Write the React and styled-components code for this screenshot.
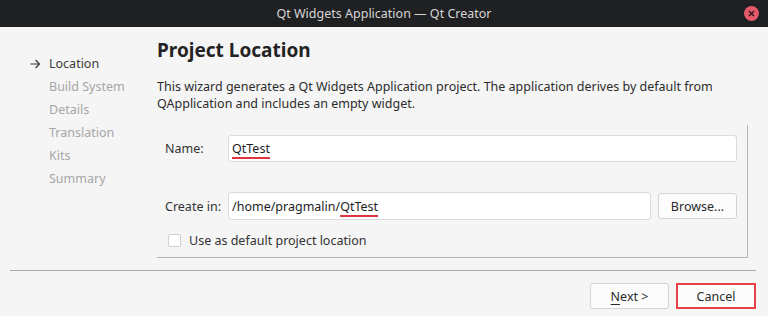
import styled, { createGlobalStyle } from 'styled-components'

const GlobalStyle = createGlobalStyle`
    html, body {
        margin: 0;
        padding: 0;
        background: #f5f5f5;
        font-family: "Noto Sans", "DejaVu Sans", sans-serif;
    }
`

const Window = styled.div`
    width: 768px;
    height: 316px;
    background: #f5f5f5;
    display: flex;
    flex-direction: column;
    overflow: hidden;
`

const TitleBar = styled.div`
    flex-shrink: 0;
    height: 27px;
    background: #1f2022;
    display: grid;
    grid-template-columns: 1fr auto 1fr;
    align-items: center;
    color: #d6d6d6;
    font-size: 12.5px;
`

const TitleText = styled.div`
    grid-column: 2;
`

const CloseButton = styled.div`
    grid-column: 3;
    justify-self: end;
    margin-right: 9px;
    width: 15px;
    height: 15px;
    border-radius: 50%;
    background: #e55a6b;
    display: flex;
    align-items: center;
    justify-content: center;
`

const Body = styled.div`
    display: flex;
    flex-shrink: 0;
`

const Sidebar = styled.div`
    width: 127px;
    padding: 25px 0 0 30px;
    display: flex;
    flex-direction: column;
`

const Step = styled.div`
    display: flex;
    align-items: center;
    height: 23px;
    font-size: 12.5px;
    color: ${p => (p.$active ? '#3b3b3b' : '#a6a6a6')};
`

const StepArrow = styled.span`
    width: 19px;
    display: flex;
    align-items: center;
`

const Main = styled.div`
    flex: 1;
    padding: 11px 20px 0 0;
    display: flex;
    flex-direction: column;
`

const Heading = styled.div`
    font-size: 19px;
    line-height: 24px;
    font-weight: 700;
    color: #232323;
`

const Description = styled.div`
    margin-top: 16px;
    font-size: 12.5px;
    line-height: 17px;
    color: #2c2c2c;
`

const Frame = styled.div`
    box-sizing: border-box;
    margin-top: 13px;
    height: 133px;
    border-right: 1px solid #b4b4b4;
    border-bottom: 1px solid #b4b4b4;
    padding: 10px 10px 0 8px;
    display: flex;
    flex-direction: column;
`

const FieldRow = styled.div`
    display: flex;
    align-items: center;
    margin-top: ${p => p.$top || 0}px;
`

const Label = styled.div`
    width: 63px;
    font-size: 12.5px;
    color: #333;
`

const Input = styled.div`
    flex: 1;
    height: ${p => p.$h || 27}px;
    box-sizing: border-box;
    background: #fff;
    border: 1px solid #dadada;
    border-radius: 3px;
    padding: 0 3px;
    display: flex;
    align-items: center;
    font-size: 12.5px;
    color: #1e1e1e;
`

const Marked = styled.span`
    text-decoration: underline;
    text-decoration-color: #e0323f;
    text-decoration-thickness: 2px;
    text-underline-offset: 4px;
`

const Button = styled.div`
    width: ${p => p.$w || 79}px;
    height: 26px;
    box-sizing: border-box;
    background: #fcfcfc;
    border: ${p => (p.$alert ? '2px solid #e8414c' : '1px solid #d4d4d4')};
    border-radius: ${p => (p.$alert ? '0' : '3px')};
    margin-left: ${p => p.$gap || 0}px;
    display: flex;
    align-items: center;
    justify-content: center;
    font-size: 12.5px;
    color: #2a2a2a;
`

const CheckRow = styled.div`
    display: flex;
    align-items: center;
    margin-top: 12px;
    padding-left: 3px;
    font-size: 12.5px;
    color: #333;
`

const CheckBox = styled.div`
    width: 13px;
    height: 13px;
    box-sizing: border-box;
    background: #fff;
    border: 1px solid #d0d0d0;
    border-radius: 2px;
    margin-right: 8px;
`

const Separator = styled.div`
    flex-shrink: 0;
    margin: 12px 12px 0 10px;
    height: 1px;
    background: #a9a9a9;
`

const Footer = styled.div`
    display: flex;
    justify-content: flex-end;
    align-items: center;
    gap: 7px;
    padding: 12px 12px 0 0;
`

const Mnemonic = styled.span`
    text-decoration: underline;
    text-underline-offset: 3px;
`

const steps = ['Location', 'Build System', 'Details', 'Translation', 'Kits', 'Summary']

function App() {
    return (
        <Window>
            <GlobalStyle />
            <TitleBar>
                <TitleText>Qt Widgets Application — Qt Creator</TitleText>
                <CloseButton>
                    <svg width="7" height="7" viewBox="0 0 7 7">
                        <path d="M1 1 L6 6 M6 1 L1 6" stroke="#3a1a1e" strokeWidth="1.6" />
                    </svg>
                </CloseButton>
            </TitleBar>
            <Body>
                <Sidebar>
                    {steps.map((s, i) => (
                        <Step key={s} $active={i === 0}>
                            <StepArrow>
                                {i === 0 && (
                                    <svg width="11" height="10" viewBox="0 0 11 10">
                                        <path d="M0.5 5 H9.5 M5.5 1 L9.5 5 L5.5 9" stroke="#3b3b3b" strokeWidth="1.2" fill="none" />
                                    </svg>
                                )}
                            </StepArrow>
                            {s}
                        </Step>
                    ))}
                </Sidebar>
                <Main>
                    <Heading>Project Location</Heading>
                    <Description>
                        This wizard generates a Qt Widgets Application project. The application derives by default from
                        <br />
                        QApplication and includes an empty widget.
                    </Description>
                    <Frame>
                        <FieldRow>
                            <Label>Name:</Label>
                            <Input>
                                <Marked>QtTest</Marked>
                            </Input>
                        </FieldRow>
                        <FieldRow $top={30}>
                            <Label>Create in:</Label>
                            <Input $h={28}>
                                /home/pragmalin/<Marked>QtTest</Marked>
                            </Input>
                            <Button $gap={7}>Browse...</Button>
                        </FieldRow>
                        <CheckRow>
                            <CheckBox />
                            Use as default project location
                        </CheckRow>
                    </Frame>
                </Main>
            </Body>
            <Separator />
            <Footer>
                <Button $w={79}>
                    <Mnemonic>N</Mnemonic>ext &gt;
                </Button>
                <Button $w={80} $alert>Cancel</Button>
            </Footer>
        </Window>
    )
}

export default App
